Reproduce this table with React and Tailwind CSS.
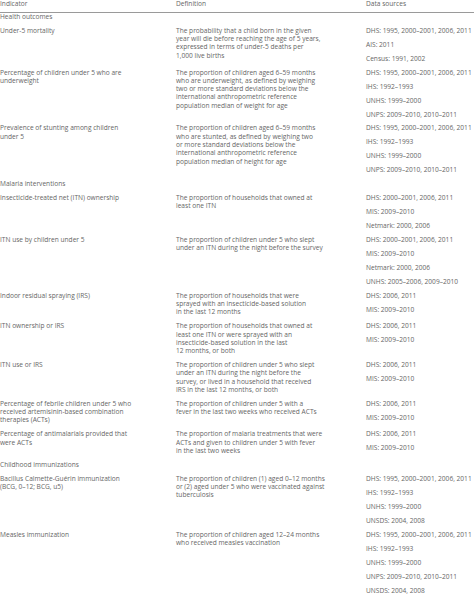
const rows = [
  { section: "Health outcomes" },
  {
    ind: ["Under-5 mortality"],
    def: [
      "The probability that a child born in the given",
      "year will die before reaching the age of 5 years,",
      "expressed in terms of under-5 deaths per",
      "1,000 live births",
    ],
    src: ["DHS: 1995, 2000–2001, 2006, 2011", "AIS: 2011", "Census: 1991, 2002"],
  },
  {
    ind: ["Percentage of children under 5 who are", "underweight"],
    def: [
      "The proportion of children aged 6–59 months",
      "who are underweight, as defined by weighing",
      "two or more standard deviations below the",
      "international anthropometric reference",
      "population median of weight for age",
    ],
    src: ["DHS: 1995, 2000–2001, 2006, 2011", "IHS: 1992–1993", "UNHS: 1999–2000", "UNPS: 2009–2010, 2010–2011"],
  },
  {
    ind: ["Prevalence of stunting among children", "under 5"],
    def: [
      "The proportion of children aged 6–59 months",
      "who are stunted, as defined by weighing two",
      "or more standard deviations below the",
      "international anthropometric reference",
      "population median of height for age",
    ],
    src: ["DHS: 1995, 2000–2001, 2006, 2011", "IHS: 1992–1993", "UNHS: 1999–2000", "UNPS: 2009–2010, 2010–2011"],
  },
  { section: "Malaria interventions" },
  {
    ind: ["Insecticide-treated net (ITN) ownership"],
    def: ["The proportion of households that owned at", "least one ITN"],
    src: ["DHS: 2000–2001, 2006, 2011", "MIS: 2009–2010", "Netmark: 2000, 2006"],
  },
  {
    ind: ["ITN use by children under 5"],
    def: ["The proportion of children under 5 who slept", "under an ITN during the night before the survey"],
    src: ["DHS: 2000–2001, 2006, 2011", "MIS: 2009–2010", "Netmark: 2000, 2006", "UNHS: 2005–2006, 2009–2010"],
  },
  {
    ind: ["Indoor residual spraying (IRS)"],
    def: ["The proportion of households that were", "sprayed with an insecticide-based solution", "in the last 12 months"],
    src: ["DHS: 2006, 2011", "MIS: 2009–2010"],
  },
  {
    ind: ["ITN ownership or IRS"],
    def: [
      "The proportion of households that owned at",
      "least one ITN or were sprayed with an",
      "insecticide-based solution in the last",
      "12 months, or both",
    ],
    src: ["DHS: 2006, 2011", "MIS: 2009–2010"],
  },
  {
    ind: ["ITN use or IRS"],
    def: [
      "The proportion of children under 5 who slept",
      "under an ITN during the night before the",
      "survey, or lived in a household that received",
      "IRS in the last 12 months, or both",
    ],
    src: ["DHS: 2006, 2011", "MIS: 2009–2010"],
  },
  {
    ind: ["Percentage of febrile children under 5 who", "received artemisinin-based combination", "therapies (ACTs)"],
    def: ["The proportion of children under 5 with a", "fever in the last two weeks who received ACTs"],
    src: ["DHS: 2006, 2011", "MIS: 2009–2010"],
  },
  {
    ind: ["Percentage of antimalarials provided that", "were ACTs"],
    def: [
      "The proportion of malaria treatments that were",
      "ACTs and given to children under 5 with fever",
      "in the last two weeks",
    ],
    src: ["DHS: 2006, 2011", "MIS: 2009–2010"],
  },
  { section: "Childhood immunizations" },
  {
    ind: ["Bacillus Calmette-Guérin immunization", "(BCG, 0–12; BCG, u5)"],
    def: [
      "The proportion of children (1) aged 0–12 months",
      "or (2) aged under 5 who were vaccinated against",
      "tuberculosis",
    ],
    src: ["DHS: 1995, 2000–2001, 2006, 2011", "IHS: 1992–1993", "UNHS: 1999–2000", "UNSDS: 2004, 2008"],
  },
  {
    ind: ["Measles immunization"],
    def: ["The proportion of children aged 12–24 months", "who received measles vaccination"],
    src: [
      "DHS: 1995, 2000–2001, 2006, 2011",
      "IHS: 1992–1993",
      "UNHS: 1999–2000",
      "UNPS: 2009–2010, 2010–2011",
      "UNSDS: 2004, 2008",
    ],
  },
];

function Lines({ lines }) {
  return (
    <div>
      {lines.map((l, i) => (
        <div key={i} className="whitespace-nowrap">
          {l}
        </div>
      ))}
    </div>
  );
}

export default function App() {
  return (
    <div className="h-[594px] w-[474px] overflow-hidden bg-white font-['Open_Sans',sans-serif] text-[6.6px] leading-[8.3px] text-[#666]">
      <div className="grid grid-cols-[176px_190px_1fr] border-b border-[#9a9a9a] pb-[3.5px]">
        <div>Indicator</div>
        <div>Definition</div>
        <div>Data sources</div>
      </div>
      {rows.map((r, i) =>
        r.section ? (
          <div key={i} className="pb-[5.6px]">
            {r.section}
          </div>
        ) : (
          <div key={i} className="grid grid-cols-[176px_190px_1fr] pb-[5.6px]">
            <Lines lines={r.ind} />
            <Lines lines={r.def} />
            <div className="flex flex-col gap-[5.7px]">
              {r.src.map((s, j) => (
                <div key={j} className="whitespace-nowrap">
                  {s}
                </div>
              ))}
            </div>
          </div>
        )
      )}
    </div>
  );
}
